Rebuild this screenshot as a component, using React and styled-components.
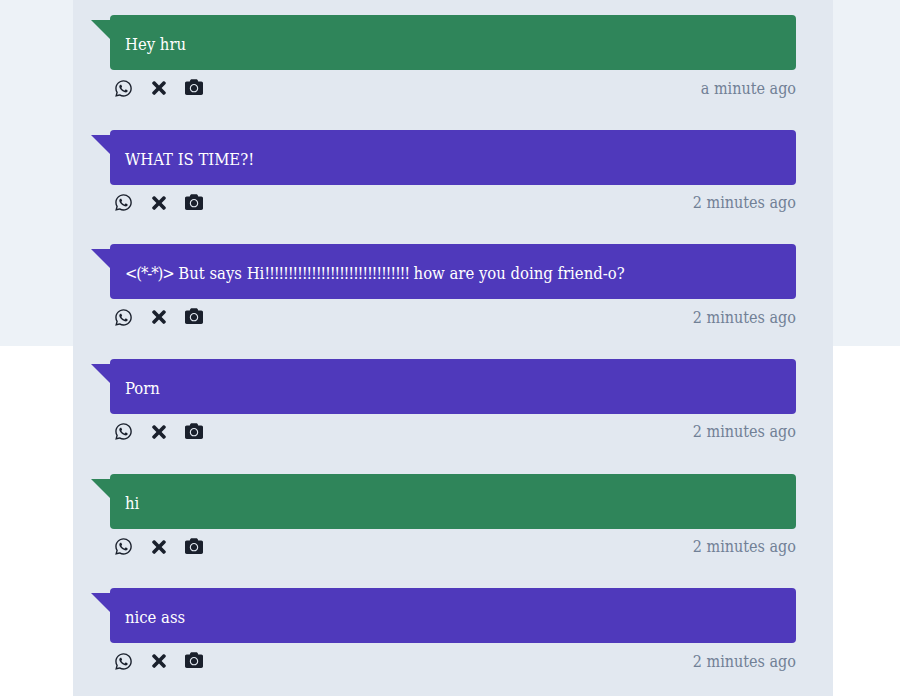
import React from 'react';
import styled, { createGlobalStyle } from 'styled-components';
import { FaWhatsapp, FaTimes, FaCamera } from 'react-icons/fa';

const messages = [
  { text: 'Hey hru', time: 'a minute ago', color: '#2f855a' },
  { text: 'WHAT IS TIME?!', time: '2 minutes ago', color: '#4f39bb' },
  {
    face: '<(*-*)>',
    text: ' But says Hi',
    bangs: '!!!!!!!!!!!!!!!!!!!!!!!!!!!!!!!',
    rest: ' how are you doing friend-o?',
    time: '2 minutes ago',
    color: '#4f39bb',
  },
  { text: 'Porn', time: '2 minutes ago', color: '#4f39bb' },
  { text: 'hi', time: '2 minutes ago', color: '#2f855a' },
  { text: 'nice ass', time: '2 minutes ago', color: '#4f39bb' },
];

export default function App() {
  return (
    <>
      <GlobalStyle />
      <Column>
        {messages.map((m, i) => (
          <Message key={i}>
            <Bubble $color={m.color}>
              <span>
                {m.face && <Face>{m.face}</Face>}
                {m.text}
                {m.bangs && <Bangs>{m.bangs}</Bangs>}
                {m.rest}
              </span>
            </Bubble>
            <Meta>
              <Icons>
                <FaWhatsapp size={19} />
                <FaTimes size={20} />
                <FaCamera size={18} />
              </Icons>
              <Time>{m.time}</Time>
            </Meta>
          </Message>
        ))}
      </Column>
    </>
  );
}

const GlobalStyle = createGlobalStyle`
  html, body {
    margin: 0;
    height: 696px;
    overflow: hidden;
  }
  body {
    background: linear-gradient(#edf2f7 346px, #fff 346px);
    font-family: "DejaVu Serif Condensed", "DejaVu Serif", serif;
  }
`;

const Column = styled.div`
  width: 760px;
  height: 696px;
  margin-left: 73px;
  padding: 15px 37px 0;
  box-sizing: border-box;
  background: #e2e8f0;
`;

const Message = styled.div`
  height: 114.67px;
`;

const Bubble = styled.div`
  position: relative;
  height: 55px;
  display: flex;
  align-items: center;
  padding: 4px 16px 0 15px;
  box-sizing: border-box;
  border-radius: 4px;
  background: ${props => props.$color};
  color: #fff;
  font-size: 16.5px;
  white-space: pre-wrap;

  &::before {
    content: '';
    position: absolute;
    left: -19px;
    top: 5px;
    border-top: 19px solid ${props => props.$color};
    border-left: 19px solid transparent;
  }
`;

const Face = styled.span`
  letter-spacing: -1.1px;
`;

const Bangs = styled.span`
  letter-spacing: -1.3px;
`;

const Meta = styled.div`
  display: flex;
  justify-content: space-between;
  align-items: center;
  height: 36px;
`;

const Icons = styled.div`
  display: grid;
  grid-template-columns: repeat(3, 27px);
  column-gap: 8px;
  align-items: center;
  justify-items: center;
  color: #1a202c;

  svg:last-child {
    margin-bottom: 2px;
  }
`;

const Time = styled.span`
  font-size: 16px;
  color: #718096;
`;
